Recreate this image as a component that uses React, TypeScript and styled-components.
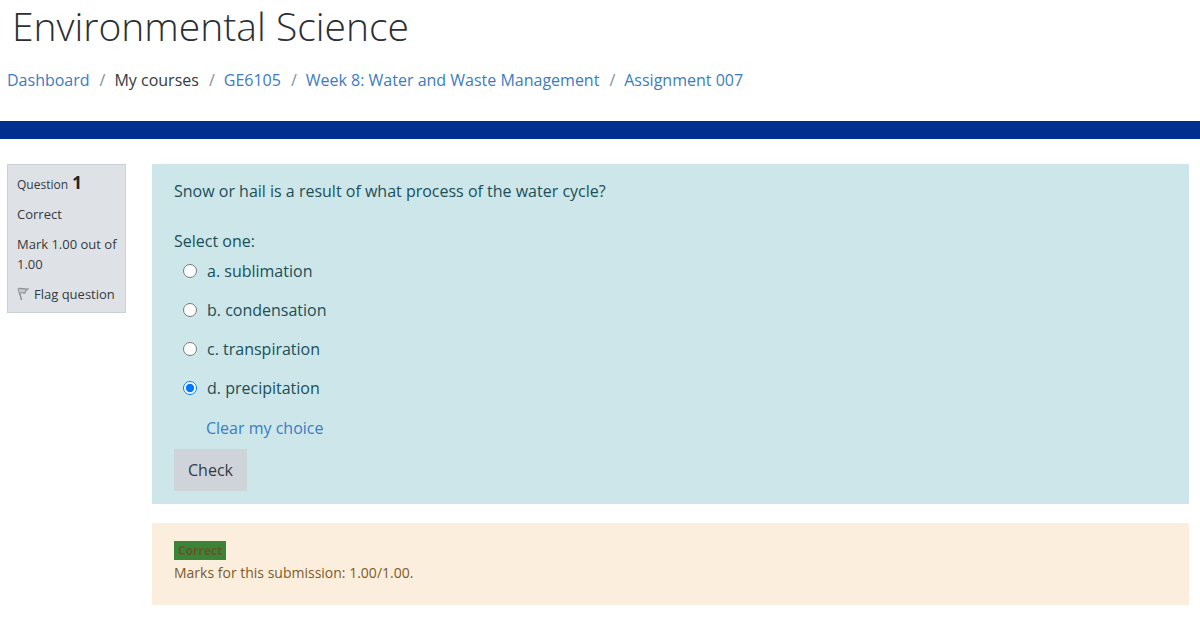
import React, { useState } from "react";
import styled, { createGlobalStyle } from "styled-components";

const GlobalStyle = createGlobalStyle`
  *, *::before, *::after { box-sizing: border-box; }
  body {
    margin: 0;
    background: #fff;
    color: #343a40;
    font-family: "Open Sans", "Noto Sans", sans-serif;
    font-size: 16px;
    line-height: 24px;
  }
`;

const Header = styled.header`
  padding: 0 7px 29px;
`;

const Title = styled.h1`
  margin: 0;
  padding: 0 5px;
  font-size: 39px;
  line-height: 52px;
  font-weight: 300;
  color: #2b2f33;
`;

const Crumbs = styled.ol`
  display: flex;
  flex-wrap: wrap;
  margin: 0;
  padding: 16px 0 0;
  list-style: none;
`;

const Crumb = styled.li`
  & + &::before {
    content: "/";
    padding: 0 9px 0 10px;
    color: #868e96;
  }
`;

const Link = styled.a`
  color: #3b7cc4;
  text-decoration: none;
`;

const Band = styled.div`
  height: 18px;
  background: #00308f;
`;

const Question = styled.main`
  display: grid;
  grid-template-columns: 119px minmax(0, 1fr);
  column-gap: 26px;
  align-items: start;
  padding: 25px 11px 22px 7px;
`;

const Info = styled.aside`
  display: flex;
  flex-direction: column;
  gap: 10px;
  padding: 10px 6px 8px 9px;
  border: 1px solid #cad0d7;
  background: #dee2e6;
  font-size: 13px;
  line-height: 20px;
`;

const InfoHeading = styled.h2`
  margin: 0;
  font-size: 12px;
  line-height: 18px;
  font-weight: 400;
`;

const Number = styled.span`
  margin-left: 1px;
  font-size: 17px;
  line-height: 16px;
  font-weight: 700;
  color: #212529;
`;

const FlagLink = styled.a`
  display: flex;
  align-items: center;
  gap: 5px;
  color: #343a40;
  text-decoration: none;
  white-space: nowrap;
`;

const Content = styled.div`
  display: flex;
  flex-direction: column;
  gap: 19px;
`;

const Formulation = styled.form`
  padding: 15px 22px 13px;
  background: #cce6ea;
  color: #1c4f57;
`;

const Prompt = styled.p`
  margin: 0 0 26px;
`;

const Answers = styled.fieldset`
  margin: 0;
  padding: 0;
  border: 0;
`;

const Legend = styled.legend`
  padding: 0;
  margin-bottom: 6px;
`;

const Option = styled.label`
  display: flex;
  align-items: center;
  gap: 10px;
  padding-left: 9px;
  margin-bottom: 15px;
`;

const Radio = styled.input`
  width: 14px;
  height: 14px;
  margin: 0;
  accent-color: #0075ff;
`;

const ClearLink = styled(Link)`
  display: block;
  width: fit-content;
  margin: 1px 0 9px 32px;
`;

const Check = styled.button`
  display: block;
  padding: 9px 14px;
  border: 0;
  background: #ced4da;
  color: #343a40;
  font: inherit;
`;

const Feedback = styled.section`
  padding: 18px 22px 19px;
  background: #fbeedd;
  color: #7d5a29;
  font-size: 14px;
  line-height: 26px;
`;

const Badge = styled.span`
  display: block;
  width: fit-content;
  padding: 0 4px;
  background: #398439;
  color: #6b5426;
  font-size: 12px;
  line-height: 19px;
  font-weight: 700;
`;

const Marks = styled.p`
  margin: 0;
`;

const FlagIcon = () => (
  <svg width="12" height="14" viewBox="0 0 12 14" fill="none" aria-hidden="true">
    <path d="M1.2 1.5 4.6 13" stroke="#8c9196" strokeWidth="1.5" />
    <path
      d="M1.4 1.6C4 .8 6.500 2.400 10.800 1.900L8.600 4 8.200 6C6.500 6.600 5 5 2.900 6.300"
      fill="#c3c8cc"
      stroke="#8c9196"
      strokeWidth="1.100"
    />
  </svg>
);

const crumbs = [
  { text: "Dashboard", link: true },
  { text: "My courses", link: false },
  { text: "GE6105", link: true },
  { text: "Week 8: Water and Waste Management", link: true },
  { text: "Assignment 007", link: true },
];

const options = ["a. sublimation", "b. condensation", "c. transpiration", "d. precipitation"];

export default function App() {
  const [choice, setChoice] = useState<number | null>(3);
  return (
    <>
      <GlobalStyle />
      <Header>
        <Title>Environmental Science</Title>
        <nav aria-label="Breadcrumb">
          <Crumbs>
            {crumbs.map((c) => (
              <Crumb key={c.text}>{c.link ? <Link href="#">{c.text}</Link> : c.text}</Crumb>
            ))}
          </Crumbs>
        </nav>
      </Header>
      <Band />
      <Question>
        <Info>
          <InfoHeading>
            Question <Number>1</Number>
          </InfoHeading>
          <div>Correct</div>
          <div>Mark 1.00 out of 1.00</div>
          <FlagLink href="#">
            <FlagIcon />
            Flag question
          </FlagLink>
        </Info>
        <Content>
          <Formulation onSubmit={(e) => e.preventDefault()}>
            <Prompt>Snow or hail is a result of what process of the water cycle?</Prompt>
            <Answers>
              <Legend>Select one:</Legend>
              {options.map((o, i) => (
                <Option key={o}>
                  <Radio type="radio" name="answer" checked={choice === i} onChange={() => setChoice(i)} />
                  {o}
                </Option>
              ))}
            </Answers>
            <ClearLink
              href="#"
              onClick={(e) => {
                e.preventDefault();
                setChoice(null);
              }}
            >
              Clear my choice
            </ClearLink>
            <Check type="submit">Check</Check>
          </Formulation>
          <Feedback>
            <Badge>Correct</Badge>
            <Marks>Marks for this submission: 1.00/1.00.</Marks>
          </Feedback>
        </Content>
      </Question>
    </>
  );
}
